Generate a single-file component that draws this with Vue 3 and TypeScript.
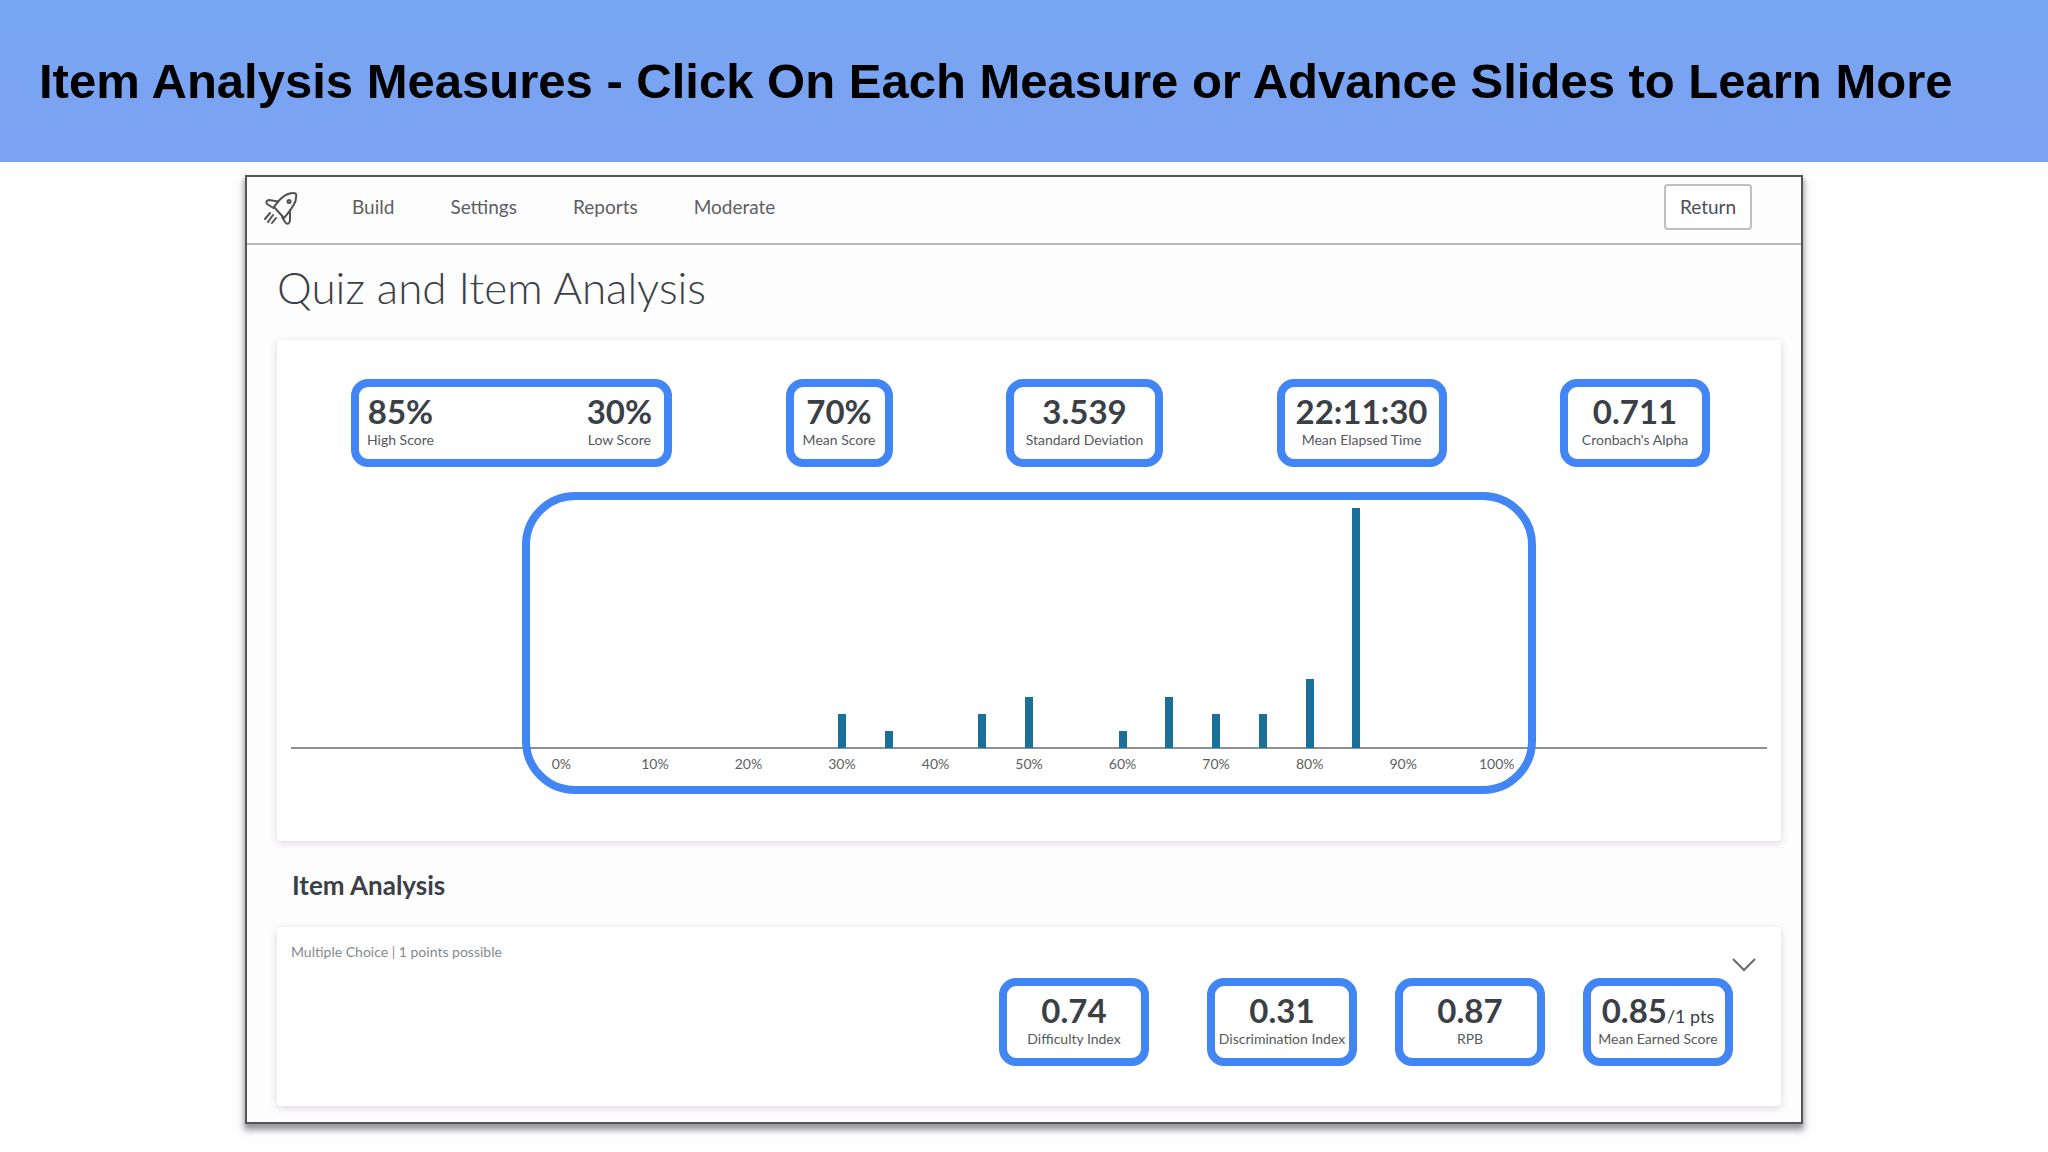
<script setup lang="ts">
interface Figure {
  value: string
  label: string
  suffix?: string
}

interface Measure {
  id: string
  figures: Figure[]
}

const menu: string[] = ['Build', 'Settings', 'Reports', 'Moderate']

const quizMeasures: Measure[] = [
  {
    id: 'range',
    figures: [
      { value: '85%', label: 'High Score' },
      { value: '30%', label: 'Low Score' },
    ],
  },
  { id: 'mean', figures: [{ value: '70%', label: 'Mean Score' }] },
  { id: 'deviation', figures: [{ value: '3.539', label: 'Standard Deviation' }] },
  { id: 'elapsed', figures: [{ value: '22:11:30', label: 'Mean Elapsed Time' }] },
  { id: 'alpha', figures: [{ value: '0.711', label: "Cronbach's Alpha" }] },
]

const itemMeasures: Measure[] = [
  { id: 'difficulty', figures: [{ value: '0.74', label: 'Difficulty Index' }] },
  { id: 'discrimination', figures: [{ value: '0.31', label: 'Discrimination Index' }] },
  { id: 'rpb', figures: [{ value: '0.87', label: 'RPB' }] },
  { id: 'earned', figures: [{ value: '0.85', label: 'Mean Earned Score', suffix: '/1 pts' }] },
]

// Number of students at each score, in steps of five percent from 0% to 100%.
const counts: number[] = [0, 0, 0, 0, 0, 0, 2, 1, 0, 2, 3, 0, 1, 3, 2, 2, 4, 14, 0, 0, 0]
const highest = Math.max(...counts)
const slots = counts.map((count, index) => ({
  score: index * 5,
  height: `${(count / highest) * 100}%`,
  labelled: index % 2 === 0,
}))
</script>

<template>
  <div class="slide">
    <header class="banner">
      <h1>Item Analysis Measures - Click On Each Measure or Advance Slides to Learn More</h1>
    </header>

    <main class="window">
      <nav class="topbar">
        <svg class="rocket" viewBox="0 0 34 34" aria-hidden="true">
          <path d="M10 15 C14 9 19 4 24 2 Q31 0 32 2 Q33 8 29 14 Q26 19 20 26 Z" />
          <path d="M14 9.500 L5 8 Q1 9 3 12 L9.500 16" />
          <path d="M26 18 L26 29 Q24 34 21 30 L18 25" />
          <circle cx="25" cy="9.500" r="1.500" />
          <path d="M6 21 L1 27 M9 23 L4 30 M12 26 L8 31" />
        </svg>
        <ul class="menu">
          <li v-for="entry in menu" :key="entry">
            <a href="#">{{ entry }}</a>
          </li>
        </ul>
        <button class="return" type="button">Return</button>
      </nav>

      <h2 class="title">Quiz and Item Analysis</h2>

      <section class="card summary">
        <div class="quiz-measures">
          <button
            v-for="measure in quizMeasures"
            :key="measure.id"
            type="button"
            class="measure"
            :class="measure.id"
          >
            <span v-for="figure in measure.figures" :key="figure.label" class="figure">
              <span class="value">{{ figure.value }}</span>
              <span class="label">{{ figure.label }}</span>
            </span>
          </button>
        </div>

        <div class="chart">
          <div class="axis"></div>
          <button type="button" class="histogram" aria-label="Score distribution">
            <span v-for="slot in slots" :key="slot.score" class="slot">
              <span class="track">
                <span class="bar" :style="{ height: slot.height }"></span>
              </span>
              <span class="tick"><template v-if="slot.labelled">{{ slot.score }}%</template></span>
            </span>
          </button>
        </div>
      </section>

      <h3 class="subtitle">Item Analysis</h3>

      <section class="card item">
        <div class="item-head">
          <p class="kind">Multiple Choice | 1 points possible</p>
          <button type="button" class="expand" aria-label="Expand item">
            <svg viewBox="0 0 24 14" aria-hidden="true">
              <path d="M1 1 L12 12 L23 1" />
            </svg>
          </button>
        </div>
        <div class="item-measures">
          <button
            v-for="measure in itemMeasures"
            :key="measure.id"
            type="button"
            class="measure"
            :class="measure.id"
          >
            <span v-for="figure in measure.figures" :key="figure.label" class="figure">
              <span class="value"
                >{{ figure.value }}<span v-if="figure.suffix" class="suffix">{{ figure.suffix }}</span></span
              >
              <span class="label">{{ figure.label }}</span>
            </span>
          </button>
        </div>
      </section>
    </main>
  </div>
</template>

<style>
body {
  margin: 0;
  background: #fefefe;
}
</style>

<style scoped>
* {
  box-sizing: border-box;
}

h1,
h2,
h3,
p,
ul {
  margin: 0;
  padding: 0;
}

button {
  font: inherit;
  color: inherit;
  cursor: pointer;
}

.slide {
  font-family: Lato, "Noto Sans", sans-serif;
  color: #3a4046;
}

.banner {
  padding: 53px 39px;
  background: linear-gradient(#78a6f0, #7ba2f3);
}

.banner h1 {
  font: bold 49px/56px "Liberation Sans", Arial, sans-serif;
  color: #000;
  white-space: nowrap;
}

.window {
  margin: 13px 245px 28px;
  border: 2px solid #555457;
  padding-bottom: 16px;
  background: #fefdfe;
  box-shadow: 0 5px 6px 1px rgba(50, 46, 54, 0.5);
}

.topbar {
  display: flex;
  align-items: center;
  height: 68px;
  padding: 0 49px 6px 17px;
  border-bottom: 2px solid #bcbabd;
}

.rocket {
  width: 34px;
  height: 34px;
  margin-top: 3px;
  fill: none;
  stroke: #4e5054;
  stroke-width: 2;
  stroke-linecap: round;
  stroke-linejoin: round;
}

.menu {
  display: flex;
  flex: 1;
  gap: 56px;
  margin-left: 54px;
  list-style: none;
}

.menu a {
  font-size: 19px;
  line-height: 24px;
  color: #5c5e62;
  text-decoration: none;
}

.return {
  width: 88px;
  height: 46px;
  padding: 0 0 2px;
  border: 2px solid #bdbfc2;
  border-radius: 4px;
  background: #fff;
  font-size: 19px;
  color: #4c5054;
}

.title {
  padding: 16px 30px 0;
  font-size: 44px;
  font-weight: 300;
  line-height: 52px;
}

.card {
  margin: 0 20px 0 30px;
  background: #fff;
  border-radius: 4px;
  box-shadow: 0 2px 8px rgba(60, 40, 70, 0.18);
}

.summary {
  margin-top: 27px;
  padding: 39px 0 47px;
}

.quiz-measures {
  display: flex;
  justify-content: space-between;
  padding: 0 71px 0 74px;
}

.measure {
  display: flex;
  justify-content: center;
  width: 150px;
  padding: 5px 0 9px;
  border: 8px solid #4285f4;
  border-radius: 17px;
  background: #fff;
}

.range {
  justify-content: space-between;
  width: 321px;
  padding-right: 12px;
  padding-left: 8px;
}

.mean {
  width: 107px;
}

.deviation {
  width: 157px;
}

.elapsed {
  width: 170px;
}

.figure {
  display: flex;
  flex-direction: column;
  align-items: center;
  white-space: nowrap;
}

.value {
  height: 38px;
  font-size: 33px;
  font-weight: 700;
  line-height: 38px;
}

.suffix {
  font-size: 18px;
  font-weight: 400;
}

.label {
  font-size: 14px;
  line-height: 20px;
  color: #55585c;
}

.chart {
  display: grid;
  margin-top: 25px;
  padding: 0 14px;
}

.axis,
.histogram {
  grid-area: 1 / 1;
}

.axis {
  align-self: end;
  height: 2px;
  margin-bottom: 45px;
  background: #8f8f91;
}

.histogram {
  display: flex;
  align-items: stretch;
  height: 302px;
  margin: 0 231px;
  padding: 8px 8px 8px;
  border: 8px solid #4285f4;
  border-radius: 53px;
  background: transparent;
}

.slot {
  display: flex;
  flex: 1 1 0;
  flex-direction: column;
  min-width: 0;
}

.track {
  display: flex;
  flex: 1;
  align-items: flex-end;
  justify-content: center;
}

.bar {
  width: 8px;
  background: #1a7099;
}

.tick {
  display: flex;
  justify-content: center;
  height: 30px;
  padding-top: 6px;
  font-size: 14px;
  line-height: 20px;
  color: #5c5e62;
  white-space: nowrap;
}

.subtitle {
  padding: 28px 45px 0;
  font-size: 26px;
  font-weight: 700;
  line-height: 32px;
}

.item {
  margin-top: 26px;
  padding: 15px 0 40px;
}

.item-head {
  display: flex;
  justify-content: space-between;
  height: 36px;
  padding: 0 25px 0 14px;
}

.kind {
  font-size: 14px;
  line-height: 20px;
  color: #85898d;
}

.expand {
  display: flex;
  align-self: flex-start;
  margin-top: 16px;
  padding: 0;
  border: 0;
  background: none;
}

.expand svg {
  width: 24px;
  height: 14px;
  fill: none;
  stroke: #66686c;
  stroke-width: 2;
}

.item-measures {
  display: flex;
  justify-content: flex-end;
  gap: 38px;
  padding-right: 48px;
}

.difficulty {
  margin-right: 20px;
}
</style>
